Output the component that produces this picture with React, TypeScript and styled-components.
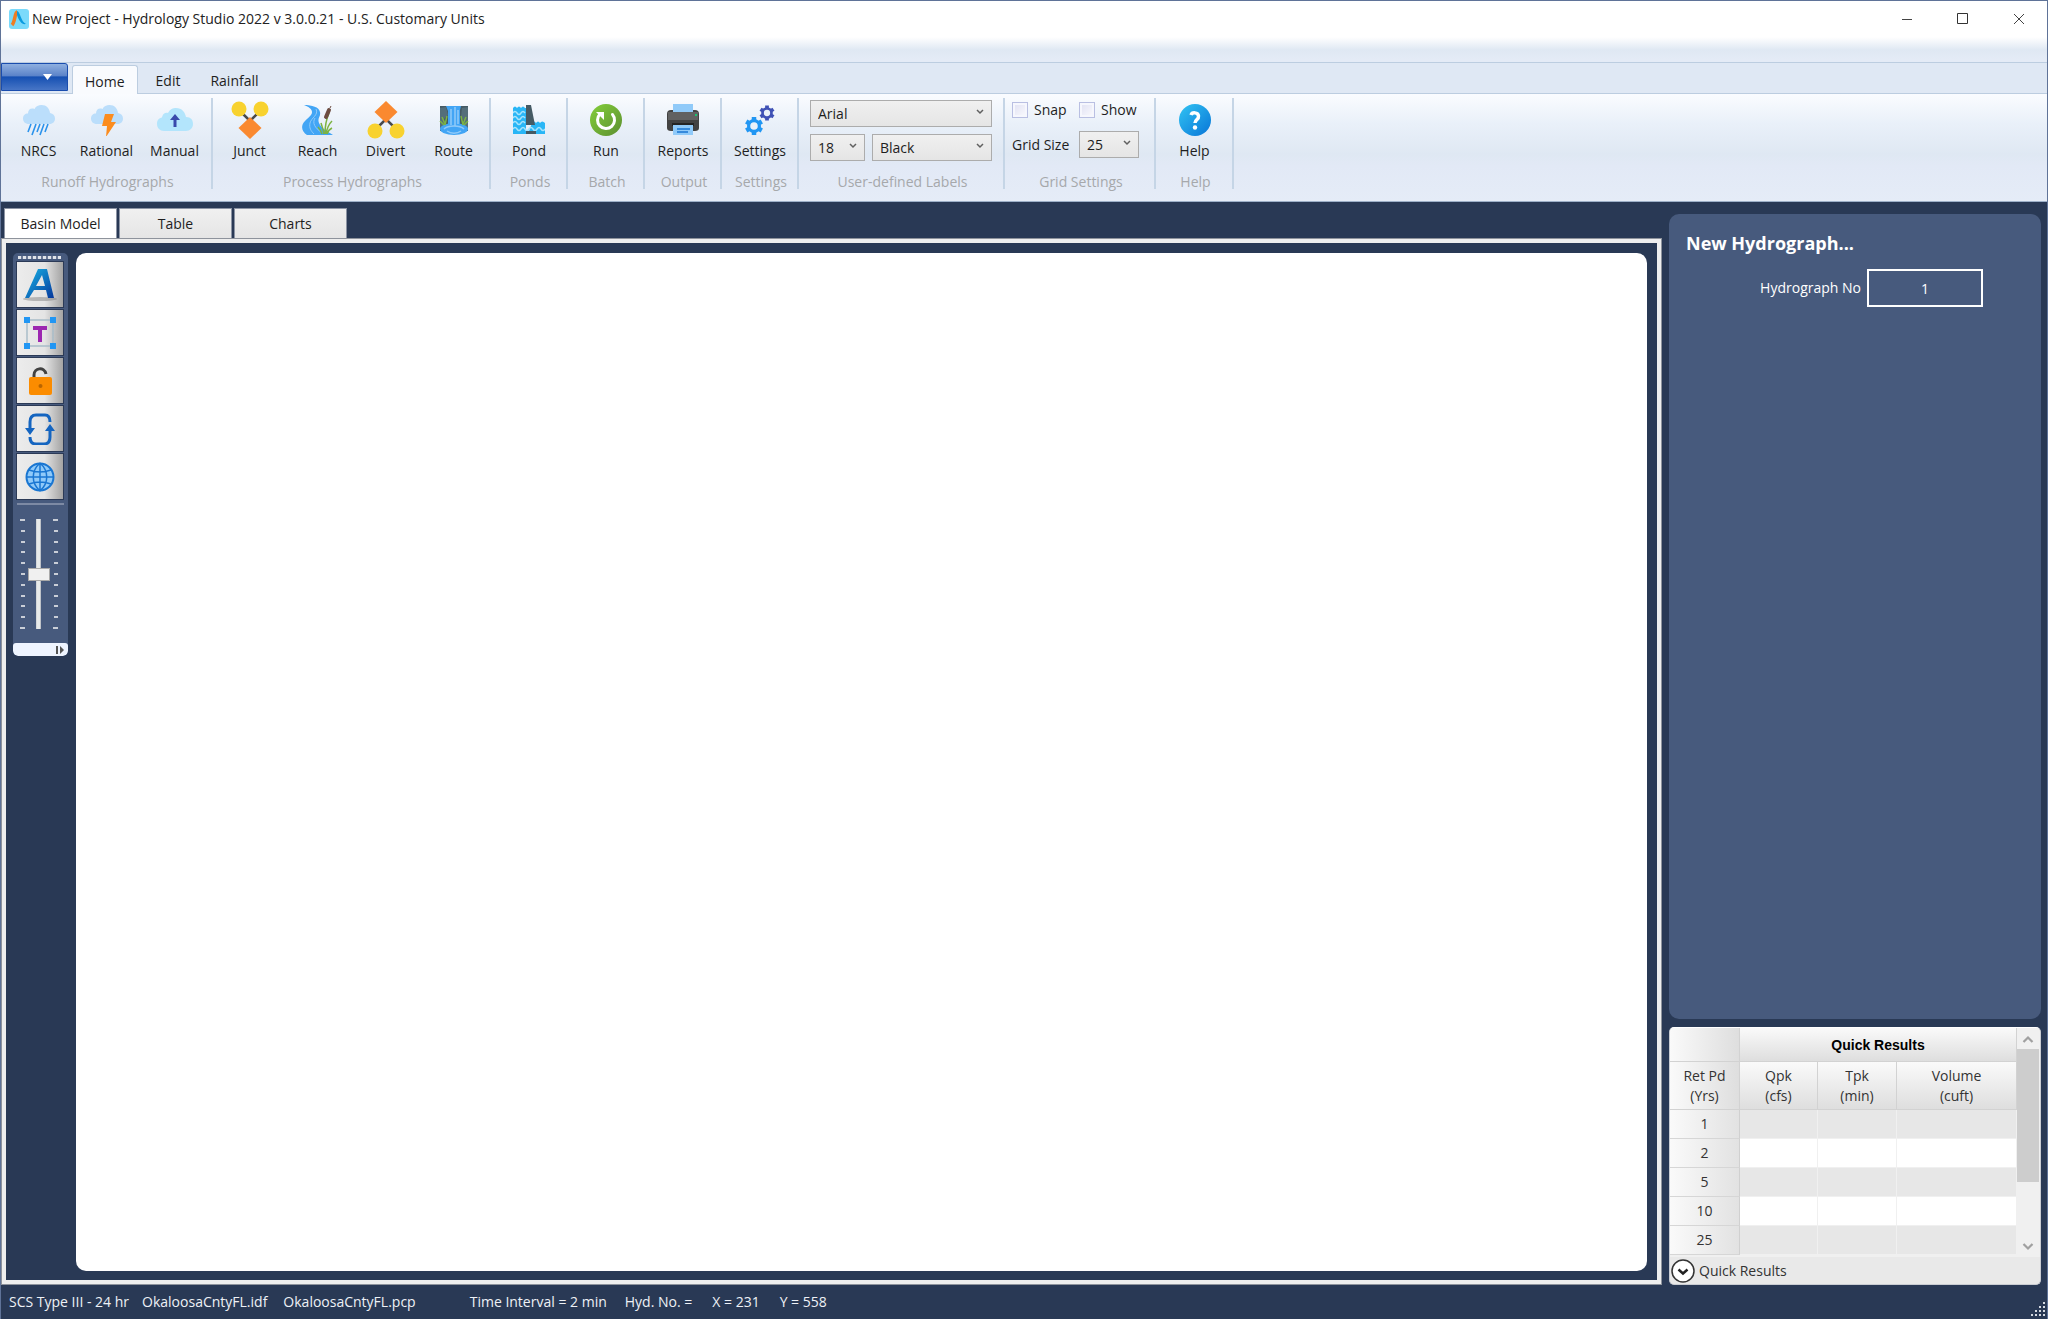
import React from "react";
import styled, { createGlobalStyle, css } from "styled-components";

const navy = "#293955";
const slate = "#475a7d";
const font = `"Open Sans", "Segoe UI", "Noto Sans", sans-serif`;

const Global = createGlobalStyle`
  *, *::before, *::after { box-sizing: border-box; }
  body { margin: 0; font-family: ${font}; font-size: 14px; line-height: 20px; color: #1e1e1e; background: ${navy}; }
  button, input, select { font: inherit; color: inherit; margin: 0; padding: 0; }
  svg { display: block; flex: none; }
`;

const Window = styled.div`
  display: flex;
  flex-direction: column;
  min-height: 100vh;
  border: 1px solid #5f7398;
  border-bottom: 0;
`;

const TitleBar = styled.header`
  display: flex;
  align-items: flex-start;
  height: 61px;
  padding-left: 8px;
  background: linear-gradient(#fff 0, #fff 36px, #dfe8f3 49px, #e4ebf6 58px);
`;

const Title = styled.h1`
  display: flex;
  align-items: center;
  gap: 3px;
  height: 36px;
  margin: 0;
  font-size: 14px;
  font-weight: 400;
  flex: 1;
  color: #222;
`;

const CaptionButton = styled.button`
  display: grid;
  place-items: center;
  width: 56px;
  height: 36px;
  border: 0;
  background: none;
`;

const TabStrip = styled.nav`
  display: flex;
  align-items: flex-end;
  height: 32px;
  border-top: 1px solid #bccde0;
  border-bottom: 1px solid #bccde0;
  background: #dfe8f4;
`;

const FileButton = styled.button`
  display: flex;
  justify-content: flex-end;
  align-items: center;
  align-self: flex-start;
  width: 67px;
  height: 28px;
  margin-right: 4px;
  padding-right: 15px;
  border: 1px solid #1a4dae;
  border-radius: 0 3px 0 0;
  background: linear-gradient(#8fb0e0, #5b83c9 45%, #1650b2 50%, #4775c6);
`;

const RibbonTab = styled.button<{ $active?: boolean }>`
  height: 28px;
  margin-right: 6px;
  padding: 3px 12px 0;
  border: 0;
  background: none;
  ${(p) =>
    p.$active &&
    css`
      border: 1px solid #bccde0;
      border-bottom: 0;
      border-radius: 3px 3px 0 0;
      background: #f9fbfe;
      height: 29px;
      margin-bottom: -1px;
    `}
`;

const Ribbon = styled.section`
  display: flex;
  height: 108px;
  padding: 4px 0 12px;
  background: linear-gradient(#fafcff 0, #e9f0f9 30px, #dfe8f3 60px, #e2e9f6 72px, #e5ecf7);
  border-bottom: 1px solid #9db0c8;
`;

const Group = styled.section<{ $width: number }>`
  display: flex;
  flex-direction: column;
  justify-content: space-between;
  flex: none;
  width: ${(p) => p.$width}px;
  border-right: 2px solid #c5d5e6;
`;

const GroupTitle = styled.h2`
  margin: 0;
  padding-left: 3px;
  font-size: 14px;
  line-height: 14px;
  font-weight: 400;
  text-align: center;
  color: #a6a8ab;
`;

const Commands = styled.div`
  display: flex;
  justify-content: center;
  padding-left: 1px;
`;

const Command = styled.button`
  display: flex;
  flex-direction: column;
  align-items: center;
  gap: 2px;
  width: 68px;
  padding: 3px 0 0;
  border: 0;
  background: none;
`;

const Fields = styled.div`
  display: flex;
  flex-direction: column;
  gap: 7px;
  padding: 2px 11px 0;
`;

const GridFields = styled.div`
  display: grid;
  grid-template-columns: 67px 60px;
  row-gap: 9px;
  align-items: center;
  padding: 0 0 0 7px;
`;

const FieldRow = styled.div`
  display: flex;
  gap: 7px;
`;

const Combo = styled.span<{ $grow?: boolean; $width?: number }>`
  display: grid;
  align-items: center;
  height: 27px;
  flex: ${(p) => (p.$grow ? "1" : "none")};
  width: ${(p) => (p.$width ? `${p.$width}px` : "auto")};
  & > * { grid-area: 1 / 1; }
  & > svg { justify-self: end; margin: 0 8px 3px 0; pointer-events: none; }
`;

const Select = styled.select`
  appearance: none;
  width: 100%;
  height: 100%;
  padding: 0 20px 0 7px;
  border: 1px solid #acacac;
  border-radius: 0;
  background: linear-gradient(#f0f0f0, #e5e5e5);
`;

const Check = styled.label`
  display: flex;
  align-items: center;
  gap: 6px;
  height: 24px;
`;

const CheckBox = styled.input`
  appearance: none;
  flex: none;
  width: 16px;
  height: 16px;
  border: 1px solid #b9bfe2;
  background: linear-gradient(135deg, #dfe0f2, #fbfbfe);
  box-shadow: inset 0 0 0 2px #f6f7fd;
`;

const Body = styled.main`
  flex: 1;
  display: grid;
  grid-template-columns: minmax(0, 1fr) 372px;
  column-gap: 7px;
  padding-right: 6px;
  background: ${navy};
`;

const Workspace = styled.section`
  display: flex;
  flex-direction: column;
  padding-top: 6px;
`;

const ViewTabs = styled.div`
  display: flex;
  gap: 2px;
  padding-left: 3px;
`;

const ViewTab = styled.button<{ $active?: boolean }>`
  width: 113px;
  height: 30px;
  border: 1px solid #8b93a3;
  border-bottom: 0;
  background: ${(p) => (p.$active ? "#fff" : "linear-gradient(#f0f0f0, #e5e5e5)")};
`;

const Frame = styled.div`
  flex: 1;
  display: flex;
  gap: 8px;
  align-items: stretch;
  padding: 10px 10px 9px 7px;
  border: 5px solid #eeeeee;
  outline: 1px solid #8e939c;
  outline-offset: -1px;
`;

const Canvas = styled.div`
  flex: 1;
  border-radius: 10px;
  background: #fff;
`;

const Tools = styled.aside`
  display: flex;
  flex-direction: column;
  align-self: flex-start;
  width: 55px;
  border-radius: 5px;
  overflow: hidden;
  background: ${slate};
`;

const Grip = styled.div`
  height: 3px;
  margin: 3px 7px 2px 5px;
  background: repeating-linear-gradient(90deg, #e0e3e8 0 3px, #6b7995 3px 5px);
`;

const ToolButton = styled.button`
  display: grid;
  place-items: center;
  width: 48px;
  height: 47px;
  margin: 0 0 1px 3px;
  border: 1px solid #2b3a57;
  background: linear-gradient(90deg, #ececec 0, #e4e4e4 60%, #a3a3a3);
`;

const ToolRule = styled.hr`
  width: 47px;
  height: 2px;
  margin: 2px 4px 14px;
  border: 0;
  background: #7d8aa4;
`;

const ZoomRow = styled.div`
  display: flex;
  gap: 3px;
  height: 110px;
  padding-left: 7px;
`;

const Ticks = styled.div`
  display: flex;
  flex-direction: column;
  justify-content: space-between;
  align-items: center;
  width: 5px;
`;

const Tick = styled.i`
  width: 4px;
  height: 2px;
  background: #c9ced7;
  &:first-child, &:last-child { width: 5px; }
`;

const ZoomSlider = styled.input`
  appearance: none;
  writing-mode: vertical-lr;
  direction: rtl;
  width: 22px;
  height: 110px;
  background: linear-gradient(90deg, transparent 8px, #bfc3c9 8px, #e7eaea 9px, #e7eaea 12px, #bfc3c9 12px, #bfc3c9 13px, transparent 13px);
  &::-webkit-slider-thumb {
    appearance: none;
    width: 22px;
    height: 13px;
    border: 1px solid #a9a9a9;
    background: #f0f0f0;
  }
`;

const ToolFooter = styled.button`
  display: flex;
  align-items: center;
  justify-content: flex-end;
  height: 13px;
  margin-top: 14px;
  padding-right: 4px;
  border: 0;
  border-radius: 3px 3px 5px 5px;
  background: #eef4ff;
`;

const Side = styled.aside`
  display: flex;
  flex-direction: column;
  gap: 8px;
  padding-top: 12px;
`;

const Inspector = styled.section`
  flex: 1;
  padding: 17px;
  border-radius: 10px;
  background: ${slate};
  color: #fff;
`;

const InspectorTitle = styled.h2`
  margin: 0 0 14px;
  font-size: 18px;
  line-height: 24px;
  font-weight: 700;
`;

const Field = styled.div`
  display: flex;
  align-items: center;
  justify-content: flex-end;
  gap: 6px;
  padding-right: 41px;
`;

const NumberBox = styled.input`
  width: 116px;
  height: 38px;
  border: 2px solid #fff;
  background: transparent;
  text-align: center;
`;

const Results = styled.section`
  border-radius: 5px;
  overflow: hidden;
  border: 1px solid #c9ccd2;
  border-top-color: #fff;
  background: #e9e9e9;
`;

const ResultsView = styled.div`
  display: flex;
  height: 229px;
  overflow: hidden;
  background: #f0f0f0;
`;

const Table = styled.table`
  flex: 1;
  table-layout: fixed;
  border-collapse: separate;
  border-spacing: 0;
  height: fit-content;
  text-align: center;
  color: #333;
`;

const HeadCell = styled.th<{ $tall?: boolean; $side?: boolean }>`
  height: ${(p) => (p.$tall ? 48 : 34)}px;
  padding: 0;
  font-weight: ${(p) => (p.$tall ? 400 : 700)};
  font-family: ${(p) => (p.$tall ? "inherit" : `Arial, "Liberation Sans", sans-serif`)};
  color: ${(p) => (p.$tall ? "#333" : "#000")};
  border-right: 1px solid #d2d2d2;
  border-bottom: 1px solid #d2d2d2;
  background: linear-gradient(${(p) => (p.$side ? "90deg" : "180deg")}, #fafafa, #dedede);
`;

const RowHead = styled.th`
  height: 29px;
  padding: 0;
  font-weight: 400;
  border-right: 1px solid #d0d0d0;
  border-bottom: 1px solid #d6d6d6;
  background: linear-gradient(90deg, #fafafa, #e2e2e2);
`;

const Cell = styled.td<{ $odd: boolean }>`
  padding: 0;
  border-right: 1px solid #f0f0f0;
  border-bottom: 1px solid #f0f0f0;
  background: ${(p) => (p.$odd ? "#e7e7e7" : "#fff")};
`;

const ScrollBar = styled.div`
  display: flex;
  flex-direction: column;
  width: 22px;
  margin-right: 1px;
`;

const ScrollButton = styled.button`
  display: grid;
  place-items: center;
  height: 21px;
  border: 0;
  background: none;
`;

const ScrollTrack = styled.div`
  flex: 1;
`;

const ScrollThumb = styled.div`
  height: 71%;
  background: #cdcdcd;
`;

const ResultsToggle = styled.button`
  display: flex;
  align-items: center;
  gap: 4px;
  width: 100%;
  height: 27px;
  padding-left: 1px;
  border: 0;
  background: none;
  color: #333;
`;

const StatusBar = styled.footer`
  display: flex;
  align-items: center;
  height: 34px;
  padding: 0 2px 0 8px;
  background: ${navy};
  color: #eef1f6;
`;

const StatusItem = styled.span<{ $gap: number }>`
  margin-right: ${(p) => p.$gap}px;
  white-space: pre;
`;

const GripCorner = styled.span`
  align-self: flex-end;
  margin-left: auto;
  padding-bottom: 3px;
`;

const IconSlot = styled.span`
  display: grid;
  place-items: center;
  height: 38px;
`;

const Svg = ({ size = 32, box = 32, children }: { size?: number; box?: number; children: React.ReactNode }) => (
  <svg width={size} height={size} viewBox={`0 0 ${box} ${box}`} fill="none" aria-hidden="true">
    {children}
  </svg>
);

const Cloud = () => (
  <path
    fill="#bbdefb"
    d="M6 20C2 20 0 17.500 0 14.500 0 11.500 2 9.500 5 9.500 5 5.500 8 3.500 11.500 5 13 2 15.500 1 18.500 1c5 0 8 3.500 8.500 8 3 .5 5 2.500 5 5.500 0 3-2 5.500-5.500 5.500z"
  />
);

const Rain = () => (
  <Svg>
    <Cloud />
    <path d="M8 20l-3 8M13 20l-4 11M17 20l-3 8M21 20l-4 11M25 20l-3 8" stroke="#2b93ec" strokeWidth="1.600" />
  </Svg>
);
const Storm = () => (
  <Svg>
    <Cloud />
    <path d="M14 10h9l-3 8h5L15 33l1-11h-5z" fill="#fb8c1e" />
  </Svg>
);
const Upload = () => (
  <svg width="36" height="32" viewBox="0 0 36 32" aria-hidden="true">
    <path fill="#b3e5fc" d="M7 27C3 27 0 24 0 20c0-4 2-6 5-6.500C6 9 9 8.500 11 9c2-4 5-5 8-5 6 0 9 4 10 9 5 0 7 3 7 7s-3 7-7 7z" />
    <path fill="#3949ab" d="M18 10l5 6h-3.500v7h-3v-7H13z" />
  </svg>
);
const Junction = ({ flip }: { flip?: boolean }) => (
  <svg width="38" height="38" viewBox="0 0 38 38" aria-hidden="true">
    <g transform={flip ? "matrix(1 0 0 -1 0 38)" : undefined}>
      <path d="M10 11l9 9 9-9" fill="none" stroke="#48494c" strokeWidth="2.500" />
      <circle cx="8" cy="8" r="7.500" fill="#f8d22f" />
      <circle cx="30" cy="8" r="7.500" fill="#f8d22f" />
      <path d="M19 16l11.500 11L19 38 7.500 27z" fill="#fa8930" />
    </g>
  </svg>
);
const River = () => (
  <Svg>
    <path fill="#42a5f5" d="M2 1c8 0 15 2 16 7s-3 6-1 11 8 8 14 12H5C0 28-2 22 3 17s7-6 7-9-3-5-8-7z" />
    <path d="M14 5c3 6-5 9-6 14s1 8 4 11M13 14c-3 5 0 10 6 14" stroke="#90caf9" strokeWidth="1" />
    <path d="M23 30c0-7 1-14 4-21M22 30c-1-5-2-8-3-11M24 30c1-6 3-10 6-13M25 30c1-3 3-5 5-6M20 30c-1-3-2-5-4-7" stroke="#7cb342" strokeWidth="1.500" />
    <path d="M27 6l-3 7" stroke="#6d4c41" strokeWidth="4" strokeLinecap="round" />
    <path d="M29 2l-1 2" stroke="#6d4c41" />
  </Svg>
);
const Waterfall = () => (
  <Svg>
    <path fill="#455a64" d="M2 2h28v25H2z" />
    <path fill="#546e7a" d="M2 4l6-1 2 8-4 4 3 8-7 2zM30 3l-6 1-1 9 3 4-2 6 6 3z" />
    <ellipse cx="16" cy="25" rx="14" ry="6" fill="#42a5f5" />
    <path fill="#42a5f5" d="M8 2h15l-1 4v18H10V7z" />
    <path d="M13 5v16M17 3v19M20 6v14" stroke="#90caf9" strokeWidth="1.500" />
    <path d="M6 25c4-4 16-4 20 0M9 27c4 3 10 3 14 0" stroke="#90caf9" strokeWidth="1.500" />
    <path d="M7 20L4 13M7 21l2-9M6 21l-4-4M25 20l3-7M25 21l-2-9M26 21l4-4" stroke="#7cb342" strokeWidth="1.500" />
  </Svg>
);
const Dam = () => (
  <Svg>
    <path fill="#29b6f6" d="M0 4q2-3 4 0q2-3 4 0q2-3 4 0h1v26H0zM19 19q2-3 4 0q2-3 4 0q2-3 5 0v11H15z" />
    <path d="M0 9q2-3 4 0t4 0t4 0M0 14q2-3 4 0t4 0t4 0M0 19q2-3 4 0t4 0t4 0M0 25q2-3 4 0t4 0t4 0t4 0t4 0t4 0t4 0t4 0" stroke="#a5e3fc" strokeWidth="1.500" />
    <path fill="#455a64" d="M13 1h5l4 20H13zM13 27h10v3H13z" />
  </Svg>
);
const RunIcon = () => (
  <Svg>
    <defs><linearGradient id="run" x1="0" y1="0" x2="1" y2="1"><stop stopColor="#84cf3a" /><stop offset="1" stopColor="#5c8f31" /></linearGradient></defs>
    <circle cx="16" cy="16" r="16" fill="url(#run)" />
    <path d="M22.500 10.500a8.500 8.500 0 1 1-12.500-.5" stroke="#fff" strokeWidth="3" strokeLinecap="round" />
    <path d="M6 8h8v8z" fill="#fff" />
  </Svg>
);
const Printer = () => (
  <Svg>
    <path fill="#90caf9" d="M6 0h20v10H6z" />
    <path fill="#424242" d="M0 10q0-4 4-4h24q4 0 4 4v14q0 3-4 3H4q-4 0-4-3z" />
    <path fill="#616161" d="M1 8h30v8H1z" />
    <path fill="#90caf9" d="M6 0h20v8H6z" />
    <path fill="#242424" d="M5 19h22v3H5z" />
    <path fill="#90caf9" d="M6 21h20v10H6z" />
    <path d="M10 25h13M10 28h11" stroke="#1976d2" strokeWidth="1.500" />
    <circle cx="29" cy="11" r="1" fill="#00e676" />
  </Svg>
);
const Gear = ({ x, y, r, color }: { x: number; y: number; r: number; color: string }) => (
  <g transform={`translate(${x} ${y})`}>
    {[0, 60, 120].map((a) => (
      <rect key={a} x={-r / 4} y={-r} width={r / 2} height={2 * r} fill={color} transform={`rotate(${a})`} />
    ))}
    <circle r={r * 0.6} fill="#eaf1f9" stroke={color} strokeWidth={r * 0.36} />
  </g>
);
const Gears = () => (
  <Svg>
    <Gear x={10} y={22} r={9} color="#2196f3" />
    <Gear x={23} y={9} r={7.5} color="#3f51b5" />
  </Svg>
);
const HelpIcon = () => (
  <Svg>
    <defs><linearGradient id="help" x1="0" y1="0" x2="1" y2="1"><stop stopColor="#32c4f3" /><stop offset="1" stopColor="#0875d7" /></linearGradient></defs>
    <circle cx="16" cy="16" r="16" fill="url(#help)" />
    <path d="M12 11c1-3 7-3 7.500 1s-3.500 3-3.500 7" stroke="#fff" strokeWidth="3.500" />
    <circle cx="16" cy="23.500" r="2.200" fill="#fff" />
  </Svg>
);
const Chevron = ({ up, color = "#606060", size = 8 }: { up?: boolean; color?: string; size?: number }) => (
  <svg width={size} height={size} viewBox="0 0 8 8" aria-hidden="true">
    <path d={up ? "M1 6l3-3 3 3" : "M1 2l3 3 3-3"} fill="none" stroke={color} strokeWidth="1.500" />
  </svg>
);

const LetterA = () => (
  <Svg size={36} box={36}>
    <defs><linearGradient id="blueA" x1="0" y1="0" x2="1" y2="1"><stop stopColor="#18b6e8" /><stop offset="1" stopColor="#06379b" /></linearGradient></defs>
    <ellipse cx="18" cy="32" rx="17" ry="2" fill="#777" opacity=".45" />
    <path fill="url(#blueA)" fillRule="evenodd" d="M16 2h9l7 29h-6l-2-8H12l-5 8H3zM20 8l-6 11h9z" />
  </Svg>
);
const TextBoxIcon = () => (
  <Svg size={32}>
    <path d="M3 3h26v26H3z" stroke="#a8bcc8" strokeWidth="1.500" />
    <path fill="#2196f3" d="M0 0h6v6H0zM26 0h6v6h-6zM0 26h6v6H0zM26 26h6v6h-6z" />
    <path fill="#9c27b0" d="M9 9h14v4h-5v12h-4V13H9z" />
  </Svg>
);
const LockIcon = () => (
  <Svg size={30} box={30}>
    <path d="M9 13V9C9 2 19 0 21 8" stroke="#424242" strokeWidth="3" />
    <rect x="4" y="11" width="23" height="18" rx="2" fill="#fb8c00" />
    <circle cx="15.500" cy="20" r="2" fill="#b96500" />
  </Svg>
);
const SyncIcon = () => (
  <Svg>
    <path d="M26 9C26 4 24 2 21 2h-9C8 2 6 4 6 9v8M6 24c0 5 2 7 6 7h8c4 0 6-2 6-7v-8" stroke="#1565c0" strokeWidth="3" />
    <path fill="#1565c0" d="M1 15h10l-5 7zM21 18h10l-5-7z" />
  </Svg>
);
const GlobeIcon = () => (
  <Svg size={30} box={30}>
    <circle cx="15" cy="15" r="13.500" fill="#90caf9" stroke="#1976d2" strokeWidth="2" />
    <path d="M15 1v28M1 15h28M4 8q11 4 22 0M4 22q11-4 22 0M15 1c-9 8-9 20 0 28M15 1c9 8 9 20 0 28" stroke="#1976d2" strokeWidth="1.500" />
  </Svg>
);

const AppLogo = () => (
  <Svg size={20} box={20}>
    <rect width="20" height="20" rx="3" fill="#7bdafb" />
    <path d="M3 16C6 13 6 3 8 3" stroke="#ef7d24" strokeWidth="3.500" />
    <path d="M8 2c3 0 4 11 9 13-4 1-7-3-9-9z" fill="#0a9be0" />
  </Svg>
);

const ResizeGrip = () => (
  <Svg size={14} box={14}>
    {[[12, 0], [8, 4], [12, 4], [4, 8], [8, 8], [12, 8], [0, 12], [4, 12], [8, 12], [12, 12]].map(([x, y]) => (
      <rect key={`${x}-${y}`} x={x} y={y} width="2" height="2" fill="#d5dae2" />
    ))}
  </Svg>
);

type Item = [string, React.ReactNode];

const CommandGroup = ({ title, width, items }: { title: string; width: number; items: Item[] }) => (
  <Group $width={width}>
    <Commands>
      {items.map(([label, icon]) => (
        <Command key={label} type="button">
          <IconSlot>{icon}</IconSlot>
          {label}
        </Command>
      ))}
    </Commands>
    <GroupTitle>{title}</GroupTitle>
  </Group>
);

const Dropdown = ({ label, value, width, grow, id }: { label?: string; value: string; width?: number; grow?: boolean; id?: string }) => (
  <Combo $width={width} $grow={grow}>
    <Select id={id} aria-label={label} defaultValue={value}>
      <option>{value}</option>
    </Select>
    <Chevron />
  </Combo>
);

const TickColumn = () => (
  <Ticks>
    {Array.from({ length: 11 }, (_, i) => (
      <Tick key={i} />
    ))}
  </Ticks>
);

export default function App() {
  return (
    <Window>
      <Global />
      <TitleBar>
        <Title><AppLogo />New Project - Hydrology Studio 2022 v 3.0.0.21 - U.S. Customary Units</Title>
        <CaptionButton aria-label="Minimize"><Svg size={12} box={12}><path d="M1 6.500h10" stroke="#444" /></Svg></CaptionButton>
        <CaptionButton aria-label="Maximize"><Svg size={12} box={12}><path d="M.5.5h10v10H.5z" stroke="#333" /></Svg></CaptionButton>
        <CaptionButton aria-label="Close"><Svg size={12} box={12}><path d="M1 1l10 10M11 1L1 11" stroke="#444" /></Svg></CaptionButton>
      </TitleBar>
      <TabStrip>
        <FileButton aria-label="File menu"><svg width="9" height="6" viewBox="0 0 9 6"><path d="M0 0h9L4.500 6z" fill="#fff" /></svg></FileButton>
        <RibbonTab $active>Home</RibbonTab>
        <RibbonTab>Edit</RibbonTab>
        <RibbonTab>Rainfall</RibbonTab>
      </TabStrip>
      <Ribbon>
        <CommandGroup title="Runoff Hydrographs" width={212} items={[["NRCS", <Rain />], ["Rational", <Storm />], ["Manual", <Upload />]]} />
        <CommandGroup title="Process Hydrographs" width={278} items={[["Junct", <Junction />], ["Reach", <River />], ["Divert", <Junction flip />], ["Route", <Waterfall />]]} />
        <CommandGroup title="Ponds" width={77} items={[["Pond", <Dam />]]} />
        <CommandGroup title="Batch" width={77} items={[["Run", <RunIcon />]]} />
        <CommandGroup title="Output" width={77} items={[["Reports", <Printer />]]} />
        <CommandGroup title="Settings" width={77} items={[["Settings", <Gears />]]} />
        <Group $width={206}>
          <Fields>
            <Dropdown label="Font" value="Arial" />
            <FieldRow>
              <Dropdown label="Font size" value="18" width={55} />
              <Dropdown label="Font color" value="Black" grow />
            </FieldRow>
          </Fields>
          <GroupTitle>User-defined Labels</GroupTitle>
        </Group>
        <Group $width={151}>
          <GridFields>
            <Check><CheckBox type="checkbox" />Snap</Check>
            <Check><CheckBox type="checkbox" />Show</Check>
            <label htmlFor="grid-size">Grid Size</label>
            <Dropdown id="grid-size" value="25" width={60} />
          </GridFields>
          <GroupTitle>Grid Settings</GroupTitle>
        </Group>
        <CommandGroup title="Help" width={78} items={[["Help", <HelpIcon />]]} />
      </Ribbon>
      <Body>
        <Workspace>
          <ViewTabs>
            <ViewTab $active>Basin Model</ViewTab>
            <ViewTab>Table</ViewTab>
            <ViewTab>Charts</ViewTab>
          </ViewTabs>
          <Frame>
            <Tools>
              <Grip />
              <ToolButton aria-label="Label"><LetterA /></ToolButton>
              <ToolButton aria-label="Text box"><TextBoxIcon /></ToolButton>
              <ToolButton aria-label="Unlock"><LockIcon /></ToolButton>
              <ToolButton aria-label="Refresh"><SyncIcon /></ToolButton>
              <ToolButton aria-label="Map"><GlobeIcon /></ToolButton>
              <ToolRule />
              <ZoomRow>
                <TickColumn />
                <ZoomSlider type="range" aria-label="Zoom" defaultValue={50} />
                <TickColumn />
              </ZoomRow>
              <ToolFooter aria-label="Expand toolbar">
                <Svg size={8} box={8}><path d="M1 0v8" stroke="#555" strokeWidth="2" /><path d="M4 0l4 4-4 4z" fill="#555" /></Svg>
              </ToolFooter>
            </Tools>
            <Canvas />
          </Frame>
        </Workspace>
        <Side>
          <Inspector>
            <InspectorTitle>New Hydrograph...</InspectorTitle>
            <Field>
              <label htmlFor="hyd-no">Hydrograph No</label>
              <NumberBox id="hyd-no" defaultValue="1" />
            </Field>
          </Inspector>
          <Results>
            <ResultsView>
              <Table>
                <colgroup>
                  <col width="70" />
                  <col width="78" />
                  <col width="79" />
                  <col width="120" />
                </colgroup>
                <thead>
                  <tr>
                    <HeadCell $side />
                    <HeadCell colSpan={3}>Quick Results</HeadCell>
                  </tr>
                  <tr>
                    <HeadCell $tall $side>Ret Pd<br />(Yrs)</HeadCell>
                    <HeadCell $tall>Qpk<br />(cfs)</HeadCell>
                    <HeadCell $tall>Tpk<br />(min)</HeadCell>
                    <HeadCell $tall>Volume<br />(cuft)</HeadCell>
                  </tr>
                </thead>
                <tbody>
                  {["1", "2", "5", "10", "25"].map((period, i) => (
                    <tr key={period}>
                      <RowHead scope="row">{period}</RowHead>
                      <Cell $odd={i % 2 === 0} />
                      <Cell $odd={i % 2 === 0} />
                      <Cell $odd={i % 2 === 0} />
                    </tr>
                  ))}
                </tbody>
              </Table>
              <ScrollBar>
                <ScrollButton aria-label="Scroll up"><Chevron up size={12} color="#a0a0a0" /></ScrollButton>
                <ScrollTrack><ScrollThumb /></ScrollTrack>
                <ScrollButton aria-label="Scroll down"><Chevron size={12} color="#a0a0a0" /></ScrollButton>
              </ScrollBar>
            </ResultsView>
            <ResultsToggle>
              <Svg size={24} box={24}><circle cx="12" cy="12" r="11" fill="#fff" stroke="#333" strokeWidth="1.500" /><path d="M7.500 10.500l4.500 4 4.500-4" stroke="#222" strokeWidth="2.500" /></Svg>
              Quick Results
            </ResultsToggle>
          </Results>
        </Side>
      </Body>
      <StatusBar>
        <StatusItem $gap={13}>SCS Type III - 24 hr</StatusItem>
        <StatusItem $gap={16}>OkaloosaCntyFL.idf</StatusItem>
        <StatusItem $gap={54}>OkaloosaCntyFL.pcp</StatusItem>
        <StatusItem $gap={18}>Time Interval = 2 min</StatusItem>
        <StatusItem $gap={20}>Hyd. No. =</StatusItem>
        <StatusItem $gap={20}>X = 231</StatusItem>
        <StatusItem $gap={0}>Y = 558</StatusItem>
        <GripCorner><ResizeGrip /></GripCorner>
      </StatusBar>
    </Window>
  );
}
